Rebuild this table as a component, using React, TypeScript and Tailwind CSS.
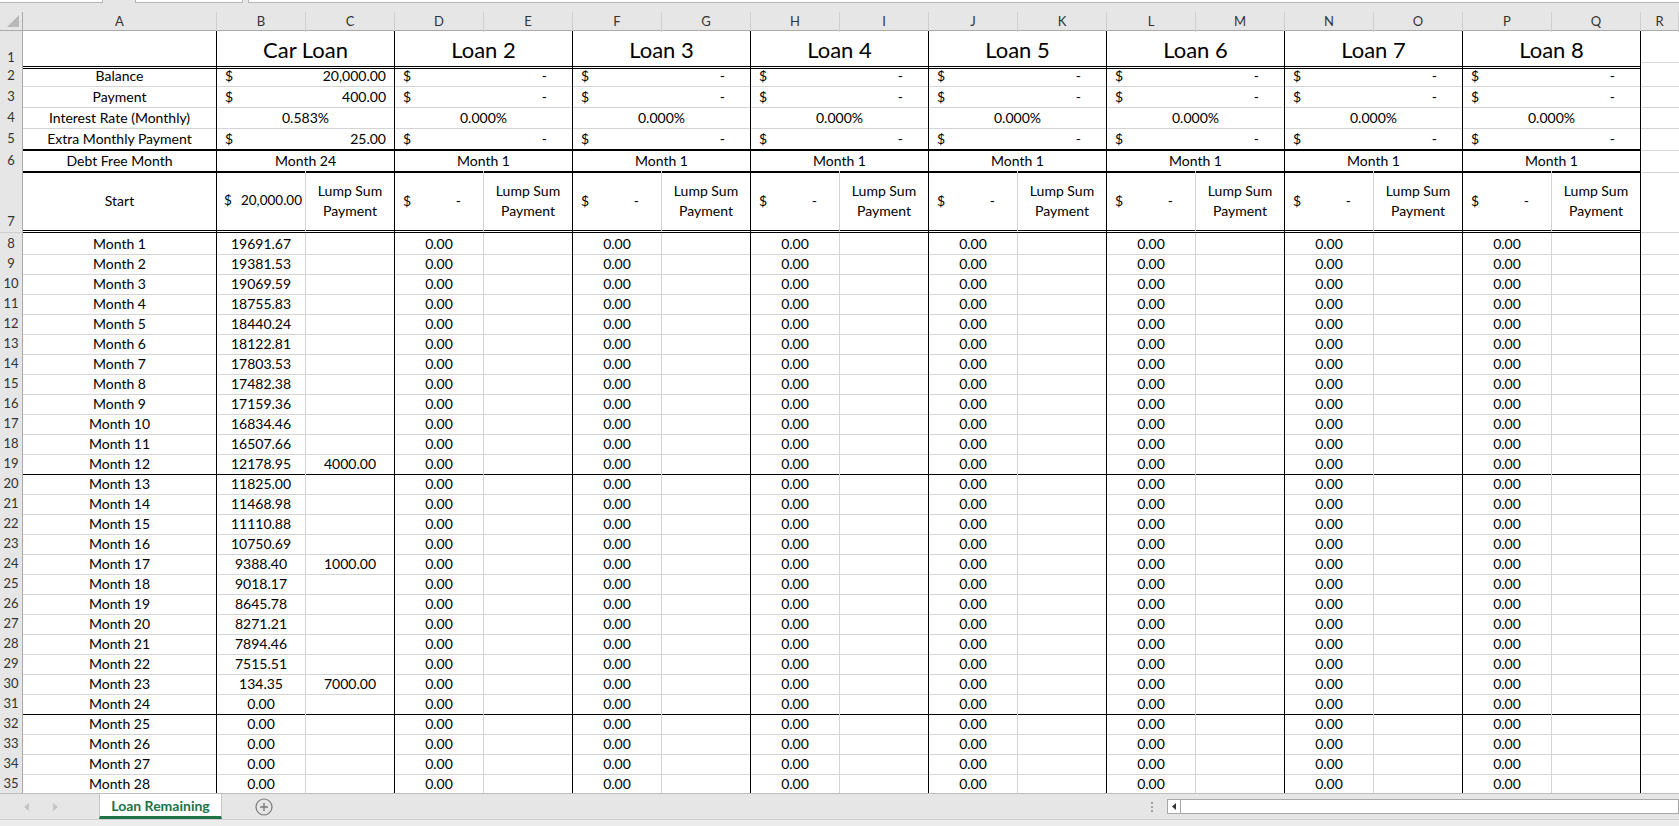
import React from "react";

const GRID = "grid grid-cols-[23px_194px_repeat(16,89px)_minmax(0,1fr)]";
const LETTERS = ["A", "B", "C", "D", "E", "F", "G", "H", "I", "J", "K", "L", "M", "N", "O", "P", "Q", "R"];
const LOANS = ["Car Loan", "Loan 2", "Loan 3", "Loan 4", "Loan 5", "Loan 6", "Loan 7", "Loan 8"];

const CAR = [
  "19691.67", "19381.53", "19069.59", "18755.83", "18440.24", "18122.81", "17803.53",
  "17482.38", "17159.36", "16834.46", "16507.66", "12178.95", "11825.00", "11468.98",
  "11110.88", "10750.69", "9388.40", "9018.17", "8645.78", "8271.21", "7894.46",
  "7515.51", "134.35", "0.00", "0.00", "0.00", "0.00", "0.00",
];
const LUMP: Record<number, string> = { 12: "4000.00", 17: "1000.00", 23: "7000.00" };

const INFO = [
  { label: "Balance", car: "20,000.00" },
  { label: "Payment", car: "400.00" },
  { label: "Interest Rate (Monthly)", pct: "0.583%" },
  { label: "Extra Monthly Payment", car: "25.00" },
];

function RowNum({ n, end }: { n: number; end?: boolean }) {
  return (
    <div
      className={`flex justify-center border-r border-b border-r-[#ababab] border-b-[#d0d0d0] bg-[#e6e6e6] text-[13px] text-[#333] ${
        end ? "items-end pb-[1px]" : "items-center"
      }`}
    >
      {n}
    </div>
  );
}

function Spare() {
  return <div className="border-b border-b-[#d4d4d4]" />;
}

export default function App() {
  return (
    <div className="flex h-[826px] w-[1679px] flex-col overflow-hidden bg-white font-['Lato',sans-serif] text-[14px] text-black">
      {/* formula bar remnants */}
      <div className="flex h-[12px] shrink-0 items-start bg-[#e6e6e6]">
        <div className="h-[3px] w-[103px] border-b border-r border-[#b5b5b5] bg-white" />
        <div className="ml-[32px] h-[3px] w-[108px] border-x border-b border-[#b5b5b5] bg-white" />
        <div className="ml-[5px] h-[3px] flex-1 border-b border-l border-[#b5b5b5] bg-white" />
      </div>

      {/* column letters */}
      <div className={`${GRID} h-[19px] shrink-0 border-b border-b-[#ababab] bg-[#e6e6e6]`}>
        <div className="border-r border-r-[#ababab]">
          <svg width="22" height="18" viewBox="0 0 22 18">
            <polygon points="19,3 19,15 7,15" fill="#b9b9b9" />
          </svg>
        </div>
        {LETTERS.map((l) => (
          <div key={l} className="flex items-center justify-center border-r border-r-[#cfcfcf] text-[13px] text-[#333]">
            {l}
          </div>
        ))}
      </div>

      {/* row 1 */}
      <div className={`${GRID} h-[34px] shrink-0`}>
        <RowNum n={1} end />
        <div className="border-r border-b-[3px] border-double border-r-black border-b-black" />
        {LOANS.map((name) => (
          <div
            key={name}
            className="col-span-2 flex items-center justify-center border-r border-b-[3px] border-double border-r-black border-b-black pt-[2px] text-[22px]"
          >
            {name}
          </div>
        ))}
        <div className="h-[32px] border-b border-b-[#d4d4d4]" />
      </div>

      {/* rows 2-5 */}
      {INFO.map((row, i) => {
        const last = i === INFO.length - 1;
        const bottom = last ? "border-b-2 border-b-black" : "border-b border-b-[#d4d4d4]";
        return (
          <div key={row.label} className={`${GRID} shrink-0 ${last ? "h-[22px]" : "h-[21px]"}`}>
            <RowNum n={i + 2} />
            <div className={`flex items-center justify-center border-r border-r-black ${bottom}`}>{row.label}</div>
            {LOANS.map((name, j) =>
              row.pct ? (
                <div key={name} className={`col-span-2 flex items-center justify-center border-r border-r-black ${bottom}`}>
                  {j === 0 ? row.pct : "0.000%"}
                </div>
              ) : (
                <div
                  key={name}
                  className={`col-span-2 flex items-center justify-between border-r border-r-black pl-[8px] ${bottom} ${
                    j === 0 ? "pr-[8px]" : "pr-[25px]"
                  }`}
                >
                  <span>$</span>
                  <span>{j === 0 ? row.car : "-"}</span>
                </div>
              )
            )}
            <Spare />
          </div>
        );
      })}

      {/* row 6 */}
      <div className={`${GRID} h-[21px] shrink-0`}>
        <RowNum n={6} />
        <div className="flex items-center justify-center border-r border-b-2 border-r-black border-b-black">Debt Free Month</div>
        {LOANS.map((name, j) => (
          <div key={name} className="col-span-2 flex items-center justify-center border-r border-b-2 border-r-black border-b-black">
            {j === 0 ? "Month 24" : "Month 1"}
          </div>
        ))}
        <Spare />
      </div>

      {/* row 7 */}
      <div className={`${GRID} h-[62px] shrink-0`}>
        <RowNum n={7} end />
        <div className="flex items-center justify-center border-r border-b-[3px] border-double border-r-black border-b-black">Start</div>
        {LOANS.map((name, j) => (
          <React.Fragment key={name}>
            <div
              className={`flex items-center justify-between border-r border-b-[3px] border-double border-r-[#d4d4d4] border-b-black ${
                j === 0 ? "pl-[7px] pr-[3px] text-[13.5px]" : "pl-[8px] pr-[22px]"
              }`}
            >
              <span>$</span>
              <span>{j === 0 ? "20,000.00" : "-"}</span>
            </div>
            <div className="flex flex-col items-center justify-center border-r border-b-[3px] border-double border-r-black border-b-black leading-[20px]">
              <span>Lump Sum</span>
              <span>Payment</span>
            </div>
          </React.Fragment>
        ))}
        <Spare />
      </div>

      {/* rows 8-35 */}
      {CAR.map((bal, k) => {
        const m = k + 1;
        const bottom = m === 12 || m === 24 ? "border-b border-b-black" : "border-b border-b-[#d4d4d4]";
        return (
          <div key={m} className={`${GRID} h-[20px] shrink-0`}>
            <RowNum n={m + 7} />
            <div className={`flex items-center justify-center border-r border-r-black ${bottom}`}>Month {m}</div>
            {LOANS.map((name, j) => (
              <React.Fragment key={name}>
                <div className={`flex items-center justify-center border-r border-r-[#d4d4d4] ${bottom}`}>
                  {j === 0 ? bal : "0.00"}
                </div>
                <div className={`flex items-center justify-center border-r border-r-black ${bottom}`}>
                  {j === 0 ? LUMP[m] ?? "" : ""}
                </div>
              </React.Fragment>
            ))}
            <Spare />
          </div>
        );
      })}

      {/* sheet tabs + scrollbar */}
      <div className="flex min-h-0 flex-1 flex-col border-t border-t-[#bdbdbd] bg-[#e6e6e6]">
        <div className="flex h-[25px] items-stretch">
          <div className="flex w-[99px] items-center">
            <svg className="ml-[24px]" width="6" height="8" viewBox="0 0 6 8">
              <polygon points="5,0 5,8 0,4" fill="#c4c4c4" />
            </svg>
            <svg className="ml-[22px]" width="6" height="8" viewBox="0 0 6 8">
              <polygon points="1,0 1,8 6,4" fill="#c4c4c4" />
            </svg>
          </div>
          <div className="flex w-[123px] items-center justify-center border-x border-b-[3px] border-x-[#c6c6c6] border-b-[#217346] bg-white text-[14px] font-bold text-[#217346]">
            Loan Remaining
          </div>
          <div className="ml-[33px] flex items-center">
            <svg width="18" height="18" viewBox="0 0 18 18">
              <circle cx="9" cy="9" r="8" fill="none" stroke="#7a7a7a" strokeWidth="1.2" />
              <path d="M9 5v8M5 9h8" stroke="#7a7a7a" strokeWidth="1.4" />
            </svg>
          </div>
          <div className="flex-1" />
          <div className="mr-[14px] flex flex-col items-center justify-center gap-[2px]">
            <span className="h-[2px] w-[2px] bg-[#a0a0a0]" />
            <span className="h-[2px] w-[2px] bg-[#a0a0a0]" />
            <span className="h-[2px] w-[2px] bg-[#a0a0a0]" />
          </div>
          <div className="flex w-[512px] items-center">
            <div className="flex h-[15px] w-full border border-[#a8a8a8] bg-white">
              <div className="flex w-[13px] items-center justify-center border-r border-r-[#a8a8a8]">
                <svg width="4" height="7" viewBox="0 0 4 7">
                  <polygon points="4,0 4,7 0,3.5" fill="#333" />
                </svg>
              </div>
            </div>
          </div>
        </div>
        <div className="flex-1 border-t border-t-[#cfcfcf] bg-[#ececec]" />
      </div>
    </div>
  );
}
